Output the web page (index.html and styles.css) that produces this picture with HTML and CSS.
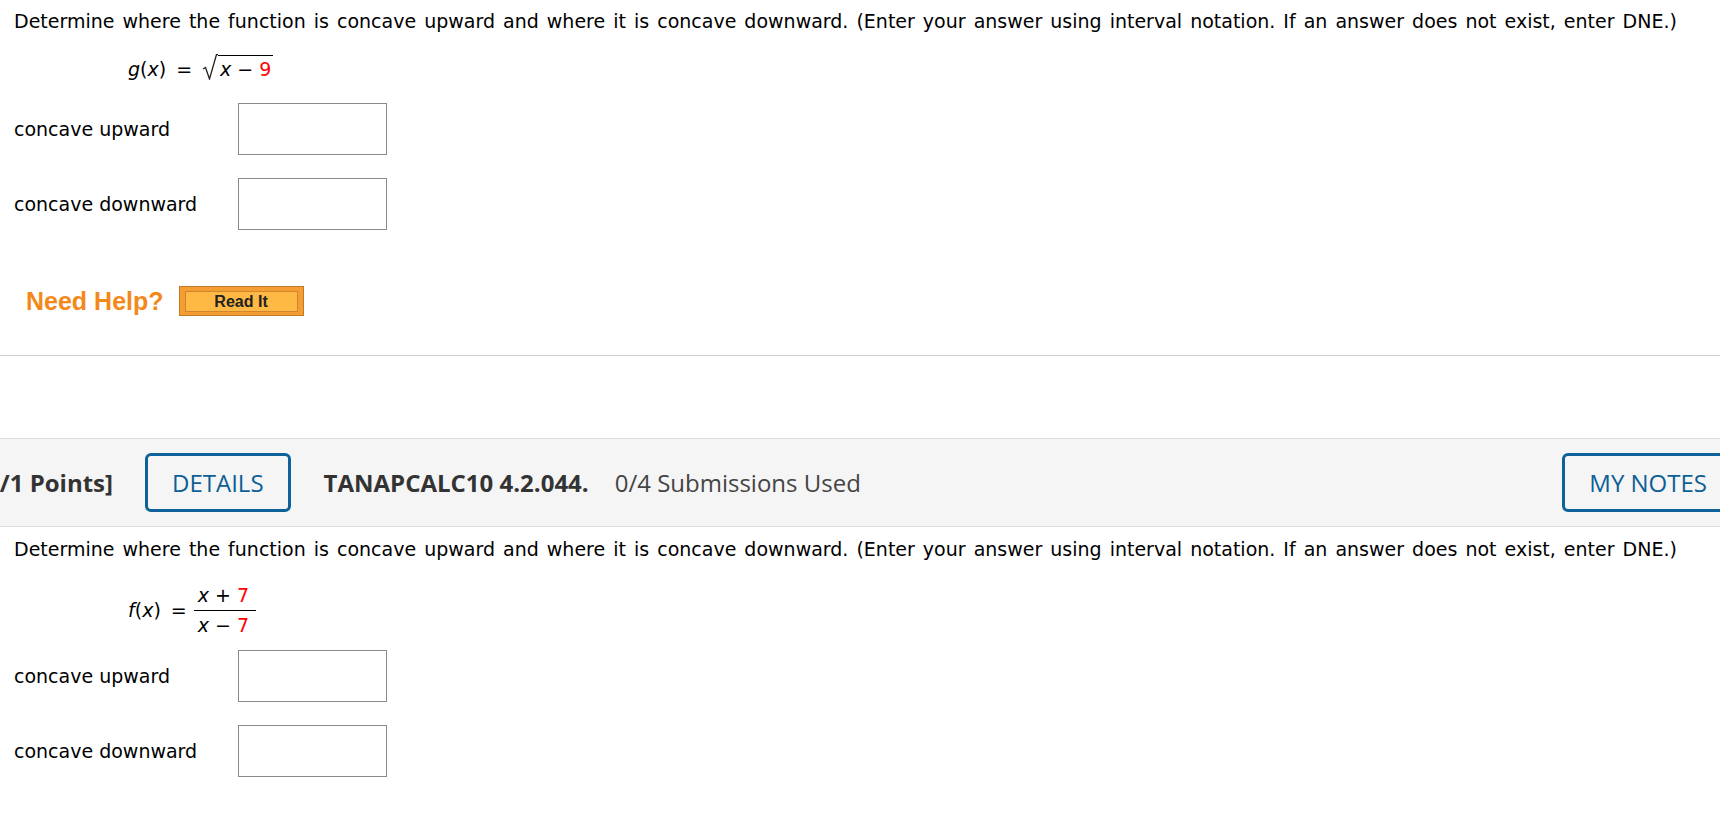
FILE: index.html
```html
<!doctype html>
<html>
    <head>
        <link rel="stylesheet" href="styles.css">
    </head>
    <body>
        <div class="question first-q">
            <p class="prompt">Determine where the function is concave upward and where it is concave downward. (Enter your answer using interval notation. If an answer does not exist, enter DNE.)</p>
            <div class="formula root-formula">
                <i>g</i>(<i>x</i>)<span class="eq">=</span><span class="radical"><svg class="radix" width="16" height="26" viewBox="0 0 16 26"><path d="M1 15 L3.5 13.5 L7.5 25 L14.5 0.5 L16 0.5" fill="none" stroke="#222" stroke-width="1.3"/></svg><span class="radicand"><i>x</i> − <span class="given">9</span></span></span>
            </div>
            <div class="answer-row">
                <span class="label">concave upward</span>
                <input class="answer" type="text">
            </div>
            <div class="answer-row">
                <span class="label">concave downward</span>
                <input class="answer" type="text">
            </div>
            <div class="help">
                <span class="need">Need Help?</span>
                <span class="read-it"><span>Read It</span></span>
            </div>
        </div>

        <div class="divider"></div>

        <div class="bar">
            <div class="points"><span>[–/1 Points]</span></div>
            <span class="btn details">DETAILS</span>
            <span class="code">TANAPCALC10 4.2.044.</span>
            <span class="subs">0/4 Submissions Used</span>
            <span class="btn notes">MY NOTES</span>
        </div>

        <div class="question second-q">
            <p class="prompt">Determine where the function is concave upward and where it is concave downward. (Enter your answer using interval notation. If an answer does not exist, enter DNE.)</p>
            <div class="formula frac-formula">
                <span class="lhs"><i>f</i>(<i>x</i>)<span class="eq">=</span></span>
                <span class="frac">
                    <span class="numer"><i>x</i> + <span class="given">7</span></span>
                    <span class="denom"><i>x</i> − <span class="given">7</span></span>
                </span>
            </div>
            <div class="answer-row">
                <span class="label">concave upward</span>
                <input class="answer" type="text">
            </div>
            <div class="answer-row">
                <span class="label">concave downward</span>
                <input class="answer" type="text">
            </div>
        </div>
    </body>
</html>
```

FILE: styles.css
```css
html, body {
    margin: 0;
    padding: 0;
    background: #fff;
}
body {
    width: 1720px;
    overflow: hidden;
    font-family: "DejaVu Sans", Verdana, sans-serif;
    font-size: 19px;
    color: #000;
}
.question {
    padding: 0 14px;
}
.prompt {
    margin: 0;
    line-height: 22px;
    white-space: nowrap;
    word-spacing: 2px;
}
.first-q .prompt {
    padding-top: 10px;
}
.second-q .prompt {
    padding-top: 11px;
}
.formula {
    margin-left: 114px;
    white-space: nowrap;
}
.formula i {
    font-style: italic;
}
.given {
    color: #f00;
}
.eq {
    margin: 0 0 0 10px;
}
.root-formula {
    margin-top: 22px;
    line-height: 28px;
}
.radical {
    margin-left: 10px;
}
.radix {
    vertical-align: -4px;
}
.radicand {
    border-top: 1px solid #000;
    padding: 2px 2px 0 2px;
}
.frac-formula {
    display: flex;
    align-items: center;
    margin-top: 24px;
}
.lhs {
    line-height: 22px;
}
.frac {
    display: flex;
    flex-direction: column;
    align-items: center;
    margin-left: 7px;
}
.numer, .denom {
    line-height: 22px;
    padding: 0 7px 0 4px;
}
.numer {
    padding-bottom: 4px;
    border-bottom: 1px solid #000;
}
.denom {
    padding-top: 3px;
}
.answer-row {
    display: flex;
    align-items: center;
    margin-top: 23px;
}
.root-formula + .answer-row {
    margin-top: 20px;
}
.frac-formula + .answer-row {
    margin-top: 14px;
}
.label {
    width: 224px;
}
.answer {
    box-sizing: border-box;
    width: 149px;
    height: 52px;
    margin: 0;
    border: 1px solid #8a8a8a;
    background: #fff;
}
.help {
    display: flex;
    align-items: center;
    margin-top: 56px;
    padding-left: 12px;
}
.need {
    font-family: "Liberation Sans", Arial, sans-serif;
    font-weight: bold;
    font-size: 25px;
    color: #f3891a;
}
.read-it {
    margin-left: 15px;
    border: 1px solid #c4782a;
    background: #f49d30;
    padding: 4px 5px 3px 5px;
}
.read-it > span {
    display: block;
    width: 111px;
    height: 19px;
    border: 1px solid #d08530;
    background: #fdb943;
    font-family: "Liberation Sans", Arial, sans-serif;
    font-weight: bold;
    font-size: 16px;
    line-height: 20px;
    text-align: center;
    color: #222;
}
.divider {
    margin-top: 39px;
    border-top: 1px solid #cfcfcf;
}
.bar {
    display: flex;
    align-items: center;
    margin-top: 82px;
    padding: 14px 0;
    background: #f5f5f5;
    border-top: 1px solid #dcdcdc;
    border-bottom: 1px solid #dcdcdc;
    font-family: "Open Sans", sans-serif;
    font-size: 24px;
    color: #333;
    white-space: nowrap;
}
.points {
    width: 113px;
    display: flex;
    justify-content: flex-end;
    overflow: hidden;
    font-weight: bold;
}
.points > span {
    flex-shrink: 0;
}
.btn {
    box-sizing: border-box;
    height: 59px;
    line-height: 53px;
    padding: 0 24px;
    border: 3px solid #0d6299;
    border-radius: 6px;
    color: #0d5f95;
    flex-shrink: 0;
}
.details {
    margin-left: 32px;
}
.code {
    margin-left: 33px;
    font-weight: bold;
}
.subs {
    margin-left: 26px;
    color: #444;
}
.notes {
    margin-left: auto;
    margin-right: -14px;
}
```
